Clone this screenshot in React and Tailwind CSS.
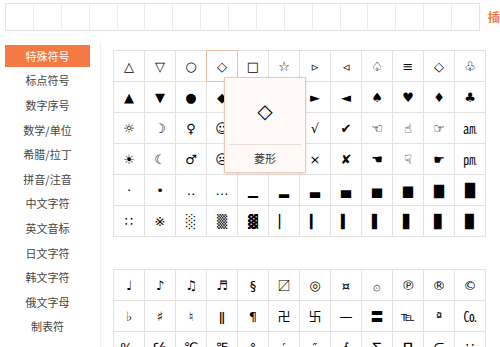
import React from "react";

const menu = [
  "特殊符号",
  "标点符号",
  "数字序号",
  "数学/单位",
  "希腊/拉丁",
  "拼音/注音",
  "中文字符",
  "英文音标",
  "日文字符",
  "韩文字符",
  "俄文字母",
  "制表符",
];

const special = [
  ["△", "▽", "○", "◇", "□", "☆", "▹", "◃", "♤", "≡", "◇", "♧"],
  ["▲", "▼", "●", "◆", "■", "★", "►", "◄", "♠", "♥", "♦", "♣"],
  ["☼", "☽", "♀", "☺", "◐", "☑", "√", "✔", "☜", "☝", "☞", "㏂"],
  ["☀", "☾", "♂", "☹", "◑", "☒", "×", "✘", "☚", "☟", "☛", "㏘"],
  ["·", "•", "‥", "…", "▁", "▂", "▃", "▄", "▅", "▆", "▇", "█"],
  ["∷", "※", "░", "▒", "▓", "▏", "▎", "▍", "▌", "▋", "▊", "▉"],
];

const music = [
  ["♩", "♪", "♫", "♬", "§", "〼", "◎", "¤", "۞", "℗", "®", "©"],
  ["♭", "♯", "♮", "ǁ", "¶", "卍", "卐", "—", "〓", "℡", "ª", "㏇"],
  ["‰", "℅", "℃", "℉", "°", "′", "″", "∮", "∑", "∏", "∈", "∵"],
];

const symFont = {
  fontFamily: '"DejaVu Sans", "Liberation Serif", "Noto Sans CJK SC", serif',
};

function SymbolGrid({ rows, hover }) {
  return (
    <div className="relative w-[373px] border-l border-t border-[#e2e2e2]">
      {rows.map((row, r) => (
        <div key={r} className="flex">
          {row.map((s, c) => (
            <div
              key={c}
              className="relative flex h-[31px] w-[31px] items-center justify-center border-r border-b border-[#e2e2e2] text-[13px] leading-none text-black"
              style={symFont}
            >
              {s}
              {hover && r === 0 && c === 3 && (
                <div className="absolute -top-px -left-px h-[32px] w-[32px] border border-[#f2bfa9]" />
              )}
            </div>
          ))}
        </div>
      ))}
      {hover && (
        <div className="absolute left-[110px] top-[26px] flex h-[96px] w-[82px] flex-col border border-[#f2c6b4] bg-[#fffaf7] shadow-sm">
          <div
            className="flex h-[66px] items-center justify-center text-[20px] text-black"
            style={symFont}
          >
            ◇
          </div>
          <div className="mx-[4px] border-t border-[#ecdcd4]" />
          <div className="flex flex-1 items-center justify-center text-[11px] text-[#333]">
            菱形
          </div>
        </div>
      )}
    </div>
  );
}

export default function App() {
  return (
    <div
      className="h-[347px] w-[500px] overflow-hidden bg-white"
      style={{ fontFamily: '"Noto Sans CJK SC", "Noto Sans", sans-serif' }}
    >
      {/* input strip */}
      <div className="flex items-center pt-[3px] pl-[5px]">
        <div className="flex h-[28px] w-[481px] border border-[#e4e4e4]">
          {Array.from({ length: 17 }).map((_, i) => (
            <div
              key={i}
              className="flex-1 border-r border-[#ececec] last:border-r-0"
            />
          ))}
        </div>
        <span className="ml-[8px] text-[12px] font-bold leading-none text-[#f47a45]">
          插
        </span>
      </div>

      <div className="mt-[11px] flex">
        {/* sidebar */}
        <div className="flex h-[310px] w-[101px] flex-col gap-[2.6px] border-r border-[#f0f0f0] pt-[3px] pl-[5px]">
          {menu.map((m, i) => (
            <div
              key={m}
              className={
                i === 0
                  ? "flex h-[22px] w-[85px] items-center justify-center bg-[#f47a45] text-[11px] text-white"
                  : "flex h-[22px] w-[85px] items-center justify-center text-[11px] text-[#444]"
              }
            >
              {m}
            </div>
          ))}
        </div>

        {/* symbol panels */}
        <div className="flex flex-col gap-[32px] pl-[12px] pt-[8px]">
          <SymbolGrid rows={special} hover />
          <SymbolGrid rows={music} />
        </div>
      </div>
    </div>
  );
}
